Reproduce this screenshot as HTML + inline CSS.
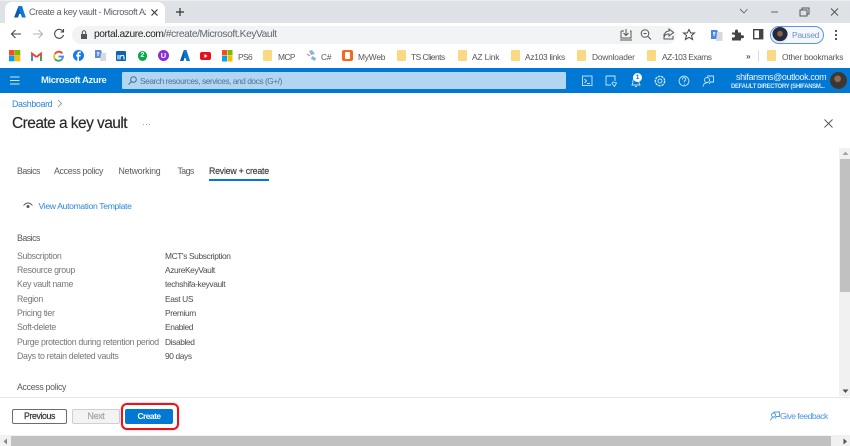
<!DOCTYPE html>
<html><head><meta charset="utf-8"><style>
*{box-sizing:border-box}
html,body{margin:0;padding:0;width:850px;height:446px;overflow:hidden;background:#fff;font-family:"Liberation Sans",sans-serif}
#w{position:absolute;left:0;top:0;width:850px;height:446px;filter:blur(.3px)}
.a{position:absolute}
.t{position:absolute;white-space:nowrap;line-height:14px;font-size:8.8px;color:#5a5a5a}
.b{color:#555;font-size:8.4px;letter-spacing:-.2px;top:50px}
.d{color:#4c4c4c;font-size:8.4px;letter-spacing:-.38px}
.l{color:#777;font-size:8.8px;letter-spacing:-.33px}
svg{position:absolute;overflow:visible}
</style></head><body><div id="w">
<div class="a" style="left:0;top:0;width:850px;height:23px;background:#dee1e6;border-top:1px solid #eceef1"></div>
<div class="a" style="left:5px;top:2px;width:160px;height:21px;background:#fff;border-radius:7px 7px 0 0"></div>
<svg style="left:14px;top:6px" width="12" height="12" viewBox="0 0 12 12"><path d="M4.5 0H8L11.8 11.5H8L6.8 8H3.5L6 6.500z" fill="#0a78d4"/><path d="M4.5 0L0 11.5H4L6 6z" fill="#0a5cab"/></svg>
<div class="t" style="left:29px;top:5px;font-size:9.300px;letter-spacing:-.42px;color:#5f6368;width:117px;overflow:hidden">Create a key vault - Microsoft Azure</div>
<svg style="left:151px;top:9px" width="7" height="7"><path d="M.5 .5L6.500 6.500M6.500 .5L.5 6.500" stroke="#333" stroke-width="1.100"/></svg>
<svg style="left:175px;top:7px" width="10" height="10"><path d="M5 1V9M1 5H9" stroke="#333" stroke-width="1.200"/></svg>
<svg style="left:740px;top:7px" width="100" height="10"><path d="M0 2L4 6L7.5 2" fill="none" stroke="#666" stroke-width=".9"/><path d="M31 5H38" stroke="#666"/><path d="M60 3H67V9H60zM62 3V1H69V7H67" fill="none" stroke="#555" stroke-width="1"/><path d="M91 1.500L98 8.500M98 1.500L91 8.500" stroke="#555"/></svg>

<svg style="left:10px;top:28px" width="12" height="12"><path d="M11 6H1.500M5.500 2L1.500 6L5.500 10" fill="none" stroke="#444" stroke-width="1.100"/></svg>
<svg style="left:32px;top:28px" width="12" height="12"><path d="M1 6H10.500M6.500 2L10.500 6L6.500 10" fill="none" stroke="#b5b5b5" stroke-width="1.100"/></svg>
<svg style="left:53px;top:28px" width="12" height="12"><path d="M10 3.500A4.500 4.500 0 1 0 10.500 7M10.500 1V4H7.500" fill="none" stroke="#444" stroke-width="1.100"/></svg>
<div class="a" style="left:72px;top:26px;width:604px;height:18px;background:#f1f3f4;border-radius:9px"></div>
<svg style="left:80px;top:30px" width="8" height="10"><rect x="1" y="4" width="6" height="5" fill="#555"/><path d="M2.300 4V2.500a1.700 1.700 0 0 1 3.400 0V4" fill="none" stroke="#555"/></svg>
<div class="t" style="left:94px;top:28px;font-size:10.200px;letter-spacing:-.4px;color:#222">portal.azure.com<span style="color:#62666a">/#create/Microsoft.KeyVault</span></div>
<svg style="left:620px;top:28px" width="72" height="13" fill="none" stroke="#555" stroke-width="1"><path d="M1 3H4M10 3H11V10H1V3M6 1V7M3.500 5L6 7.500L8.500 5M0 12H12" /><circle cx="25" cy="5.500" r="3.800"/><path d="M28 8.500L31 11.500M23.500 5.500H26.500"/><path d="M44 6V11H53V8M49 1L53.500 4.500L49 8V6C46 6 45 7 44 9C44 5.500 46 3 49 3z"/><path d="M69 1.500L70.700 5H74.500L71.500 7.500L72.600 11.500L69 9.300L65.400 11.500L66.500 7.500L63.500 5H67.300z" stroke="#444"/></svg>
<svg style="left:710px;top:29px" width="13" height="13"><path d="M1 1H7L8 3V10H1z" fill="#4a86e8"/><path d="M7 3H12.500V12H6z" fill="#d5d8dc"/><path d="M3 4H5.500M4 3V7" stroke="#fff"/></svg>
<svg style="left:731px;top:29px" width="12" height="12"><path d="M1 3.500H4V2a1.500 1.500 0 0 1 3 0V3.500H10V6.300H11.500a1.500 1.500 0 0 1 0 3H10V11.500H1V8.500H2.500a1.500 1.500 0 0 0 0-3H1z" fill="#444"/></svg>
<svg style="left:753px;top:29px" width="11" height="11"><rect x=".7" y=".7" width="9" height="9" fill="none" stroke="#444" stroke-width="1.400"/><rect x="6" y="1" width="4" height="9" fill="#444"/></svg>
<div class="a" style="left:770px;top:26px;width:54px;height:18px;border:1px solid #5b93e6;border-radius:9px;background:#f4f7fd"></div>
<div class="a" style="left:772px;top:27px;width:16px;height:16px;border-radius:8px;background:radial-gradient(circle at 50% 42%,#8a6048 0 22%,#232b3c 24% 60%,#dfe7f4 62%)"></div>
<div class="t" style="left:792px;top:28px;font-size:8.600px;letter-spacing:-.35px;color:#6d8fcf">Paused</div>
<svg style="left:834px;top:29px" width="4" height="12" fill="#444"><circle cx="2" cy="2" r="1.100"/><circle cx="2" cy="6" r="1.100"/><circle cx="2" cy="10" r="1.100"/></svg>

<svg style="left:9px;top:50px" width="12" height="12"><rect width="5.500" height="5.500" fill="#f25022"/><rect x="5.800" width="5.500" height="5.500" fill="#7fba00"/><rect y="5.800" width="5.500" height="5.500" fill="#00a4ef"/><rect x="5.800" y="5.800" width="5.500" height="5.500" fill="#ffb900"/></svg>
<svg style="left:31px;top:52px" width="11" height="9" fill="none" stroke-width="1.800"><path d="M1 9V1.500L5.500 5" stroke="#e94235"/><path d="M10 9V1.500L5.500 5" stroke="#e94235"/><path d="M1 9V4" stroke="#4285f4"/><path d="M10 9V4" stroke="#34a853"/></svg>
<svg style="left:53px;top:51px" width="11" height="11" fill="none" stroke-width="1.800"><path d="M9.300 2.500A4.300 4.300 0 0 0 2 3" stroke="#ea4335"/><path d="M2 3A4.300 4.300 0 0 0 2 8" stroke="#fbbc05"/><path d="M2 8A4.300 4.300 0 0 0 9 8" stroke="#34a853"/><path d="M9 8Q10 7 10 5.500H5.500" stroke="#4285f4"/></svg>
<svg style="left:73px;top:50px" width="11" height="11"><circle cx="5.500" cy="5.500" r="5.500" fill="#1877f2"/><path d="M6 11V6.500H7.500L7.800 4.800H6V3.800Q6 3 7 3H7.900V1.500H6.500Q4.300 1.500 4.300 3.600V4.800H3V6.500H4.300V11z" fill="#fff"/></svg>
<svg style="left:95px;top:50px" width="11" height="12"><path d="M0 0H6L7 3V8H0z" fill="#5a8de0"/><path d="M6 3H11V11H5z" fill="#d5d8dc"/><path d="M2 3H4.500M3 2V6" stroke="#fff"/></svg>
<svg style="left:116px;top:51px" width="10" height="10"><rect width="10" height="10" rx="1" fill="#0a66b2"/><path d="M2 4V8.500M4 4V8.500M4 5.500Q8 3 8 6V8.500" stroke="#fff" stroke-width="1.100" fill="none"/></svg>
<div class="a" style="left:138px;top:51px;width:9px;height:10px;border-radius:5px;background:#0ba84a;color:#fff;font-size:7px;font-weight:bold;text-align:center;line-height:10px">2</div>
<div class="a" style="left:158px;top:50px;width:11px;height:11px;border-radius:6px;background:#8a2fd1;color:#fff;font-size:7.500px;font-weight:bold;text-align:center;line-height:11px">U</div>
<svg style="left:180px;top:50px" width="10" height="11"><path d="M3.800 0H6.500L10 11H6.500L5.500 8H3L5 6.500z" fill="#0a78d4"/><path d="M3.800 0L0 11H3.500L5 5.500z" fill="#0a5cab"/></svg>
<svg style="left:200px;top:51px" width="12" height="10"><rect y="1" width="11" height="8" rx="2" fill="#e6101c"/><path d="M4.500 3V7L7.500 5z" fill="#fff"/></svg>
<svg style="left:222px;top:50px" width="11" height="12"><rect width="5" height="5.500" fill="#f25022"/><rect x="5.500" width="5" height="5.500" fill="#7fba00"/><rect y="6" width="5" height="5.500" fill="#00a4ef"/><rect x="5.500" y="6" width="5" height="5.500" fill="#ffb900"/></svg>
<div class="t b" style="left:238px;letter-spacing:-.6px">PS6</div>
<div class="a" style="left:263px;top:50px;width:9px;height:11px;background:#fbd983;border-radius:1px"></div>
<div class="t b" style="left:278px;letter-spacing:-.6px">MCP</div>
<svg style="left:307px;top:50px" width="10" height="12"><path d="M2 1L5 0L8 4L4 5zM5 6L9 8L8 11L4 9z" fill="#8ab4dc"/><path d="M0 4L3 6" stroke="#d9705a"/></svg>
<div class="t b" style="left:321px">C#</div>
<div class="a" style="left:342px;top:50px;width:11px;height:11px;background:#f4681f;border-radius:2px"></div><div class="a" style="left:345px;top:52px;width:5px;height:7px;background:#fff;border-radius:1px"></div>
<div class="t b" style="left:358px">MyWeb</div>
<div class="a" style="left:397px;top:50px;width:9px;height:11px;background:#fbd983;border-radius:1px"></div>
<div class="t b" style="left:411px;letter-spacing:-.5px">TS Clients</div>
<div class="a" style="left:458px;top:50px;width:9px;height:11px;background:#fbd983;border-radius:1px"></div>
<div class="t b" style="left:472px;letter-spacing:-.15px">AZ Link</div>
<div class="a" style="left:511px;top:50px;width:9px;height:11px;background:#fbd983;border-radius:1px"></div>
<div class="t b" style="left:525px;letter-spacing:-.27px">Az103 links</div>
<div class="a" style="left:577px;top:50px;width:9px;height:11px;background:#fbd983;border-radius:1px"></div>
<div class="t b" style="left:592px">Downloader</div>
<div class="a" style="left:647px;top:50px;width:9px;height:11px;background:#fbd983;border-radius:1px"></div>
<div class="t b" style="left:662px;letter-spacing:-.5px">AZ-103 Exams</div>
<div class="t b" style="left:746px;top:49px;font-weight:bold;color:#555">»</div>
<div class="a" style="left:758px;top:50px;width:1px;height:12px;background:#dadce0"></div>
<div class="a" style="left:767px;top:50px;width:9px;height:11px;background:#fbd983;border-radius:1px"></div>
<div class="t b" style="left:782px">Other bookmarks</div>

<div class="a" style="left:0;top:68px;width:850px;height:25px;background:#0078d4"></div>
<svg style="left:10px;top:76px" width="10" height="9"><path d="M0 1H9.500M0 4.500H9.500M0 8H9.500" stroke="#cfe6f7" stroke-width="1"/></svg>
<div class="t" style="left:41px;top:74px;font-size:9.500px;letter-spacing:-.4px;font-weight:bold;color:#eaf4fc">Microsoft Azure</div>
<div class="a" style="left:122px;top:72px;width:444px;height:17px;background:#b2d6f2;border-radius:1px"></div>
<svg style="left:128px;top:76px" width="9" height="9"><circle cx="5.500" cy="3.500" r="2.800" fill="none" stroke="#3f6f96"/><path d="M3.500 5.500L.5 8.500" stroke="#3f6f96"/></svg>
<div class="t" style="left:140px;top:74px;font-size:8.400px;letter-spacing:-.46px;color:#4f7391">Search resources, services, and docs (G+/)</div>
<svg style="left:582px;top:74px" width="220" height="14" fill="none" stroke="#cfe6f7" stroke-width=".9"><rect x=".5" y="2" width="9.500" height="9.500"/><path d="M2.500 5L4.500 7L2.500 9M5 9.500H8"/><path d="M24 2H33V7M24 2V11H29M31 8L34.500 9L32.500 12.500L30 9.500z"/><path d="M50 11Q51 9 51 6.500A3.500 3.500 0 0 1 57 5V9L58 11zM53 12.500H55"/><circle cx="78" cy="7" r="2"/><circle cx="78" cy="7" r="4.700" stroke-dasharray="2.500 .8" stroke-width="1.400"/><circle cx="102" cy="7" r="4.900"/><path d="M100.300 5.500Q100.500 3.700 102 3.700Q103.800 3.700 103.800 5.200Q103.800 6.200 102.300 7V8.300M102.300 9.700V10.700"/><circle cx="125" cy="6" r="2.500"/><path d="M121 12.500Q121.500 9 125 8.700M125 2H131.500V8H128.500L127 10"/></svg>
<div class="a" style="left:633px;top:73px;width:9px;height:9px;border-radius:5px;background:#fff;color:#0078d4;font-size:6.500px;line-height:9px;text-align:center;font-weight:bold">1</div>
<div class="t" style="left:736px;top:70px;font-size:9px;letter-spacing:-.38px;color:#eaf4fc">shifansms@outlook.com</div>
<div class="t" style="left:731px;top:80px;font-size:6px;letter-spacing:-.33px;font-weight:bold;color:#d5e9f8">DEFAULT DIRECTORY (SHIFANSM...</div>
<div class="a" style="left:830px;top:72px;width:17px;height:17px;border-radius:9px;background:radial-gradient(circle at 45% 40%,#8a6a55 0 22%,#3c3732 26% 70%,#6a6258)"></div>

<div class="t" style="left:12px;top:97px;font-size:8.900px;letter-spacing:-.35px;color:#2b86d9">Dashboard</div>
<svg style="left:57px;top:99px" width="6" height="9"><path d="M1 1L4.500 4.500L1 8" fill="none" stroke="#8a8a8a" stroke-width=".8"/></svg>
<div class="t" style="left:12px;top:115px;font-size:15.500px;letter-spacing:-.55px;line-height:18px;color:#292827;-webkit-text-stroke:.15px #292827">Create a key vault</div>
<div class="t" style="left:142px;top:117px;font-size:9px;color:#999">···</div>
<svg style="left:824px;top:119px" width="9" height="9"><path d="M.5.5L8.500 8.500M8.500.5L.5 8.500" stroke="#555" stroke-width=".9"/></svg>

<div class="t" style="left:17px;top:164px;letter-spacing:-.5px">Basics</div>
<div class="t" style="left:54px;top:164px;letter-spacing:-.32px">Access policy</div>
<div class="t" style="left:118.500px;top:164px;letter-spacing:-.2px">Networking</div>
<div class="t" style="left:177.500px;top:164px;letter-spacing:-.6px">Tags</div>
<div class="t" style="left:209px;top:164px;letter-spacing:-.23px;color:#3a3a3a;-webkit-text-stroke:.15px #3a3a3a">Review + create</div>
<div class="a" style="left:209px;top:179px;width:60px;height:2px;background:#0078d4"></div>
<svg style="left:23px;top:202px" width="10" height="7" fill="none" stroke="#555"><path d="M.5 3.500Q5-1.500 9.500 3.500" stroke-width=".9"/><circle cx="5" cy="4.500" r="1.500" fill="#555" stroke="none"/></svg>
<div class="t" style="left:38.500px;top:199px;font-size:8.600px;letter-spacing:-.33px;color:#2b86d9">View Automation Template</div>

<div class="t" style="left:17px;top:231px;letter-spacing:-.5px">Basics</div>
<div class="t l" style="left:17px;top:249px">Subscription</div><div class="t d" style="left:165px;top:249px">MCT's Subscription</div>
<div class="t l" style="left:17px;top:263px">Resource group</div><div class="t d" style="left:165px;top:263px">AzureKeyVault</div>
<div class="t l" style="left:17px;top:277px">Key vault name</div><div class="t d" style="left:165px;top:277px">techshifa-keyvault</div>
<div class="t l" style="left:17px;top:292px">Region</div><div class="t d" style="left:165px;top:292px">East US</div>
<div class="t l" style="left:17px;top:306px">Pricing tier</div><div class="t d" style="left:165px;top:306px">Premium</div>
<div class="t l" style="left:17px;top:320px">Soft-delete</div><div class="t d" style="left:165px;top:320px">Enabled</div>
<div class="t l" style="left:17px;top:335px">Purge protection during retention period</div><div class="t d" style="left:165px;top:335px">Disabled</div>
<div class="t l" style="left:17px;top:349px">Days to retain deleted vaults</div><div class="t d" style="left:165px;top:349px">90 days</div>
<div class="t" style="left:17px;top:380px;letter-spacing:-.32px">Access policy</div>

<div class="a" style="left:839px;top:148px;width:11px;height:248px;background:#f1f1f1"></div>
<div class="a" style="left:840px;top:159px;width:10px;height:133px;background:#c1c1c1"></div>
<svg style="left:842px;top:151px" width="7" height="5"><path d="M3.500 0.500L6.500 4H.5z" fill="#a5a5a5"/></svg>
<svg style="left:842px;top:389px" width="7" height="5"><path d="M.5 .5H6.500L3.500 4z" fill="#505050"/></svg>

<div class="a" style="left:0;top:397px;width:850px;height:1px;background:#e6e6e6"></div>
<div class="a" style="left:12px;top:409px;width:55px;height:15px;background:#fff;border:1px solid #6d6d6d;border-radius:2px;text-align:center;font-size:8.800px;letter-spacing:-.4px;line-height:13px;color:#333;-webkit-text-stroke:.2px #333">Previous</div>
<div class="a" style="left:72px;top:409px;width:48px;height:15px;background:#f3f3f3;border:1px solid #cfcfcf;border-radius:2px;text-align:center;font-size:8.800px;letter-spacing:-.3px;line-height:13px;color:#a5a5a5;-webkit-text-stroke:.2px #a5a5a5">Next</div>
<div class="a" style="left:125px;top:409px;width:48px;height:15px;background:#0078d4;border-radius:2px;text-align:center;font-size:8.400px;letter-spacing:-.5px;line-height:15px;color:#fff;font-weight:bold">Create</div>
<div class="a" style="left:121px;top:403px;width:58px;height:27px;border:2px solid #e8131b;border-radius:6px;box-shadow:0 0 2px rgba(232,19,27,.35)"></div>
<svg style="left:770px;top:411px" width="10" height="10" fill="none" stroke="#4a96e4" stroke-width=".9"><circle cx="3.500" cy="4" r="2"/><path d="M.5 9.500Q1 7 3.500 6.300M3.500 1H9.500V5.500H6.500L5 7.500"/></svg>
<div class="t" style="left:780px;top:409px;font-size:8.600px;letter-spacing:-.55px;color:#4a96e4">Give feedback</div>

<div class="a" style="left:0;top:435px;width:850px;height:11px;background:#f1f1f1"></div>
<div class="a" style="left:11px;top:436px;width:820px;height:10px;background:#c1c1c1"></div>
<svg style="left:3px;top:438px" width="5" height="7"><path d="M4 .5V6.500L.5 3.500z" fill="#888"/></svg>
<svg style="left:843px;top:438px" width="5" height="7"><path d="M.5 .5V6.500L4 3.500z" fill="#505050"/></svg>
</div></body></html>
